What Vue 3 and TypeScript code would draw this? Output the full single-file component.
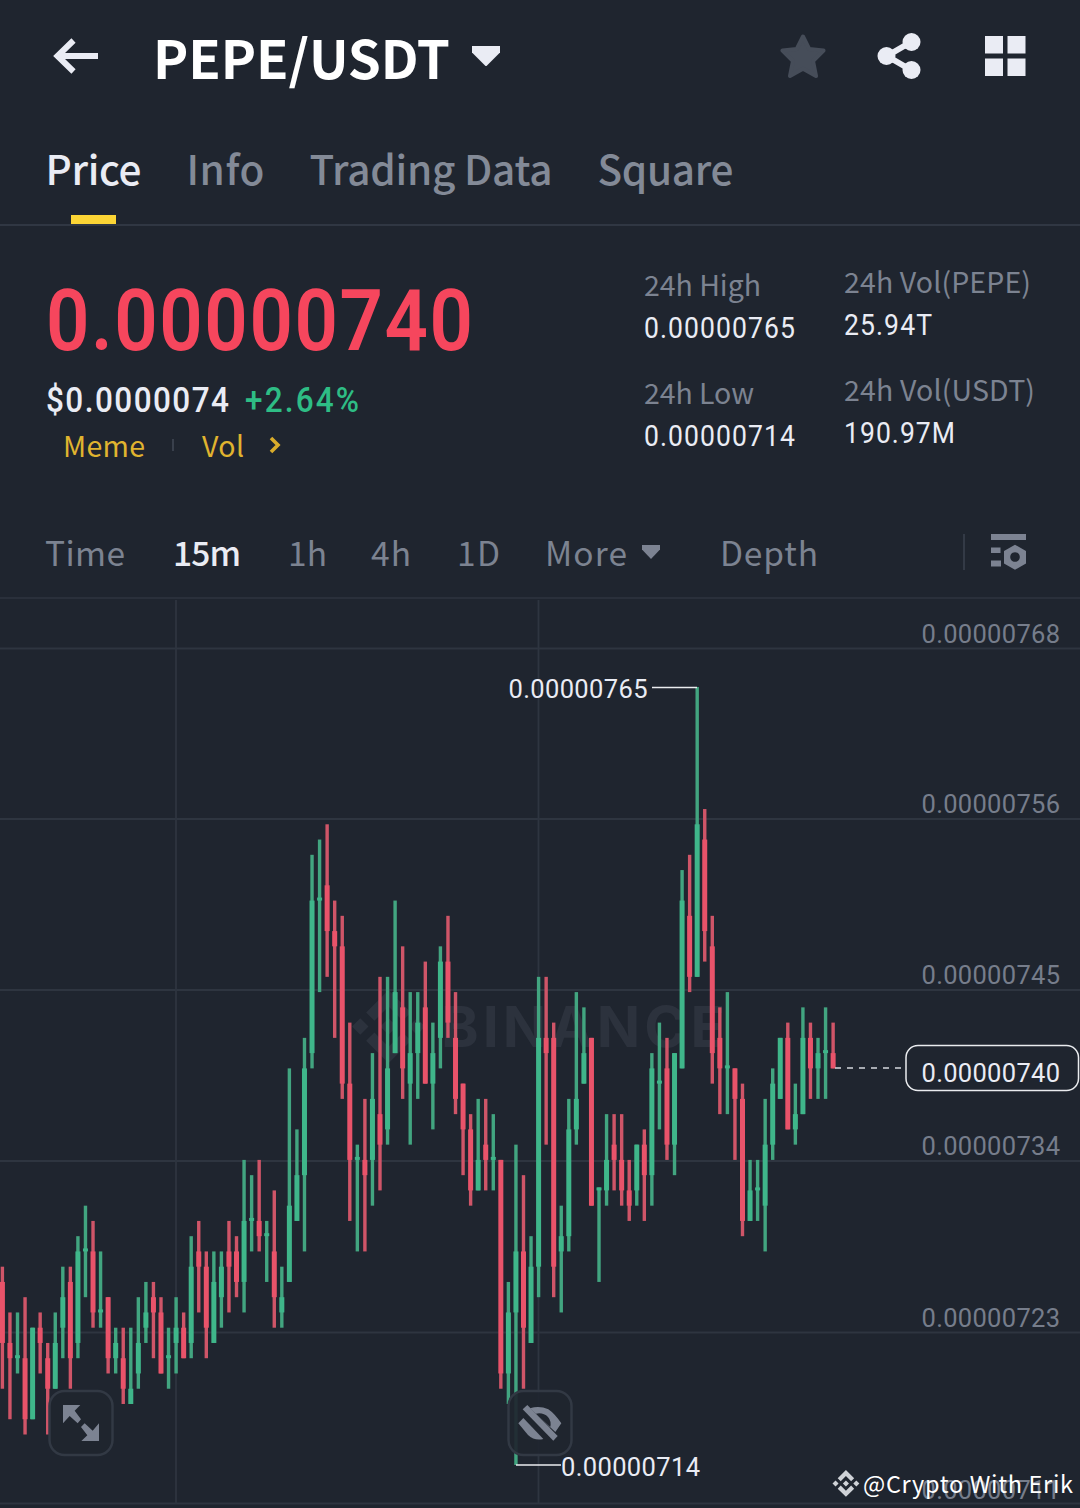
<script setup lang="ts">
interface Tab { label: string; width: number; active?: boolean }
interface Stat { label: string; labelWidth: number; value: string; valueWidth: number }
interface Candle { x: number; up: boolean; high: number; top: number; bottom: number; low: number }

// Spreads the letters of a label so that its glyphs span the given width.
const vFit = {
  mounted(el: HTMLElement, binding: { value: number }) {
    const count = (el.textContent ?? '').length
    const scale = el.classList.contains('digits') ? 0.9 : 1
    const spacing = (binding.value / scale - el.getBoundingClientRect().width / scale) / Math.max(count - 1, 1)
    el.style.letterSpacing = `${spacing}px`
    el.style.marginRight = `${-spacing - (1 - scale) * (binding.value / scale)}px`
  },
}

const tabs: Tab[] = [
  { label: 'Price', width: 96, active: true },
  { label: 'Info', width: 78 },
  { label: 'Trading Data', width: 243 },
  { label: 'Square', width: 136 },
]

const statColumns: Stat[][] = [
  [
    { label: '24h High', labelWidth: 117, value: '0.00000765', valueWidth: 151 },
    { label: '24h Low', labelWidth: 110, value: '0.00000714', valueWidth: 151 },
  ],
  [
    { label: '24h Vol(PEPE)', labelWidth: 187, value: '25.94T', valueWidth: 88 },
    { label: '24h Vol(USDT)', labelWidth: 191, value: '190.97M', valueWidth: 111 },
  ],
]

const HIGH = 765
const TOP_Y = 687
const STEP = 15.255
const yOf = (ticks: number): number => TOP_Y + ticks * STEP

// Direction, then high, body top, body bottom and low, in ticks below the 24h high.
const series = `
R38,39,43,46 R41,43,44,48 G41,44,44,45 R40,44,48,49 G42,42,48,48 R41,42,43,45 R43,44,46,49 G41,43,46,46
G38,40,42,44 R38,39,44,46 G36,37,43,44 G34,37,37,40 R35,37,41,42 G37,41,41,42 R40,40,44,45 G42,43,44,45
R42,44,46,47 G42,46,47,47 G40,43,45,46 G39,41,42,43 R39,40,41,44 R40,41,45,45 G42,44,44,46 G40,42,43,45
R41,42,44,44 G36,38,43,44 R35,37,38,41 R37,38,42,44 G37,39,43,43 G37,38,40,42 R35,37,38,41 R36,37,39,40
G31,35,39,41 G32,35,35,37 R31,35,36,37 G35,36,36,39 R33,37,40,42 G38,40,41,42 G25,34,39,39 G29,32,35,35
G23,25,32,37 G11,14,24,25 G10,14,14,20 R9,13,16,19 R14,16,17,23 R15,17,26,27 R22,26,31,35 G30,31,31,37
R27,31,32,37 G24,27,31,34 R19,28,30,33 G19,25,29,30 G14,20,24,24 R17,21,25,27 G20,24,26,30 G20,22,24,27
R18,21,26,26 G22,24,26,29 G17,18,23,25 R15,18,22,23 R20,23,27,28 R26,26,29,32 R28,29,33,34 G27,31,33,33
R27,30,31,33 G28,31,31,33 R31,31,45,46 G39,41,45,47 G30,37,41,51 R32,37,42,46 G36,38,43,43 G19,23,38,40
R19,23,24,30 R22,23,38,40 G34,36,37,41 G27,29,36,37 G20,27,29,30 G21,24,26,26 R23,23,34,34 G33,33,33,39
G28,31,33,34 R28,30,31,33 R28,31,33,34 R31,33,34,35 G30,30,33,34 R29,30,32,35 G24,25,32,34 G22,26,26,29
R23,25,30,31 G24,24,30,32 G12,14,25,25 R11,15,19,20 G0,9,19,19 R8,10,16,18 R15,17,24,26 R21,23,25,28
G20,25,25,28 R25,25,27,31 R26,27,35,36 G31,33,35,35 G31,33,33,35 G27,30,34,37 G25,26,30,31 G23,23,27,27
R22,23,29,29 G26,28,29,30 G21,23,28,28 R22,23,25,27 G23,24,25,27 G21,24,24,27 R22,24,25,25`

const candles: Candle[] = series.trim().split(/\s+/).map((entry, i) => {
  const [high, top, bottom, low] = entry.slice(1).split(',').map(Number)
  const bottomY = yOf(bottom)
  return {
    x: 2.4 + i * 7.552,
    up: entry[0] === 'G',
    high: top === high ? Math.min(yOf(high), bottomY - 3) : yOf(high),
    top: Math.min(yOf(top), bottomY - 3),
    bottom: bottomY,
    low: yOf(low),
  }
})

const axis = [
  { price: 768, line: 648.5, center: 634 },
  { price: 756, line: 819, center: 804 },
  { price: 745, line: 990, center: 975 },
  { price: 734, line: 1161, center: 1146 },
  { price: 723, line: 1332.5, center: 1318 },
  { price: 711, line: 1503.5, center: 1489.5 },
]
const format = (ticks: number): string => `0.00000${ticks}`

const logo =
  'M16.624 13.92l2.7175 2.7154-7.353 7.353-7.353-7.352 2.7175-2.7164 4.6355 4.6595zM21.26 9.2836L24 12l-2.7154 2.7164L18.5682 12zM11.9885 9.2846l2.7163 2.6914-2.7164 2.7174L9.2721 12zM2.7163 9.2836L5.4088 12l-2.6914 2.6924L0 12zM11.9885.0115l7.353 7.329-2.7174 2.7154-4.6356-4.6356-4.6355 4.6595-2.7174-2.7154z'
</script>

<template>
  <main class="screen">
    <header class="header">
      <svg class="back" width="48" height="40" viewBox="0 0 48 40">
        <path d="M46 20H5M21.500 4.500L5.500 20l16 15.500" fill="none" stroke="#eaecf4" stroke-width="6" />
      </svg>
      <h1 class="title"><span v-fit="297" class="fit">PEPE/USDT</span></h1>
      <svg width="28" height="20" viewBox="0 0 28 20"><path d="M0 0h28v6.500L14 20.500 0 6.500z" fill="#eaecf4" /></svg>
      <div class="actions">
        <svg width="46" height="48" viewBox="0 0 46 48">
          <path d="M23 4.500l6.200 12.500L43.500 18.500 33 29 36 44l-13-7.200L10 44l3-15L2.500 18.500l14.300-1.500z" fill="#464d59" stroke="#464d59" stroke-width="4" stroke-linejoin="round" />
        </svg>
        <svg width="44" height="48" viewBox="0 0 44 48">
          <path d="M34 10L10 24l24 14" fill="none" stroke="#eaecf4" stroke-width="6" />
          <circle cx="9.500" cy="24" r="9" fill="#eaecf4" />
          <circle cx="34.500" cy="10" r="9" fill="#eaecf4" />
          <circle cx="34.500" cy="38" r="9" fill="#eaecf4" />
        </svg>
        <svg width="41" height="40" viewBox="0 0 41 40">
          <path d="M0 0h18v17.500H0zM22.500 0h18v17.500h-18zM0 22.500h18V40H0zM22.500 22.500h18V40h-18z" fill="#eaecf4" />
        </svg>
      </div>
    </header>

    <nav class="tabs">
      <div v-for="tab in tabs" :key="tab.label" class="tab" :class="{ active: tab.active }">
        <span v-fit="tab.width" class="fit">{{ tab.label }}</span>
      </div>
    </nav>

    <section class="summary">
      <div class="quote">
        <div class="price"><span v-fit="427" class="fit digits">0.00000740</span></div>
        <div class="fiat">
          <span v-fit="183" class="fit digits">$0.0000074</span>
          <span v-fit="114" class="fit digits change">+2.64%</span>
        </div>
        <div class="tags">
          <span v-fit="82" class="fit">Meme</span>
          <i class="tag-rule"></i>
          <span v-fit="42" class="fit">Vol</span>
          <svg width="12" height="18" viewBox="0 0 12 18"><path d="M2 2l7 7-7 7" fill="none" stroke="#d9ac2b" stroke-width="3.600" /></svg>
        </div>
      </div>
      <div v-for="(column, c) in statColumns" :key="c" class="stats" :class="{ volume: c === 1 }">
        <div v-for="stat in column" :key="stat.label" class="stat">
          <div class="stat-label"><span v-fit="stat.labelWidth" class="fit">{{ stat.label }}</span></div>
          <div class="stat-value"><span v-fit="stat.valueWidth" class="fit digits">{{ stat.value }}</span></div>
        </div>
      </div>
    </section>

    <nav class="periods">
      <div class="period time"><span v-fit="80" class="fit">Time</span></div>
      <div class="period m15"><span v-fit="68" class="fit">15m</span></div>
      <div class="period h1"><span v-fit="39" class="fit">1h</span></div>
      <div class="period h4"><span v-fit="40" class="fit">4h</span></div>
      <div class="period d1"><span v-fit="43" class="fit">1D</span></div>
      <div class="period more">
        <span v-fit="82" class="fit">More</span>
        <svg class="caret" width="18" height="14" viewBox="0 0 18 14"><path d="M0 0h18v4.500L9 14 0 4.500z" fill="#7c8392" /></svg>
      </div>
      <div class="period depth"><span v-fit="98" class="fit">Depth</span></div>
      <i class="period-rule"></i>
      <svg class="settings" width="36" height="38" viewBox="0 0 36 38">
        <path d="M0 2h35v6H0zM0 15.500h9.500v5.500H0zM0 28.500h10v6H0z" fill="#7c8392" />
        <path fill-rule="evenodd" d="M24 13.500l11 6.200v12.600l-11 6.200-11-6.200V19.700zM24 21a4.800 4.800 0 1 0 .01 0z" transform="translate(0 -.8)" fill="#7c8392" />
      </svg>
    </nav>

    <svg class="chart" width="1080" height="911" viewBox="0 597 1080 911">
      <rect y="597" width="1080" height="2" fill="#2a303b" />
      <g stroke="#2e3540" stroke-width="1.800">
        <line v-for="row in axis" :key="row.price" x1="0" x2="1080" :y1="row.line" :y2="row.line" />
        <line x1="176" x2="176" y1="600" y2="1504" />
        <line x1="538.500" x2="538.500" y1="600" y2="1504" />
      </g>

      <g fill="#2c323d">
        <path :d="logo" transform="translate(352 990) scale(3.050)" />
        <text class="brand" x="441" y="1047" textLength="284">BINANCE</text>
      </g>

      <g class="axis">
        <text v-for="row in axis" :key="row.price" x="921.500" :y="row.center + 9.300" textLength="138.500">{{ format(row.price) }}</text>
      </g>

      <g v-for="(candle, i) in candles" :key="i" :class="candle.up ? 'up' : 'down'">
        <rect class="wick" :x="candle.x - 1.700" :y="candle.high" width="3.400" :height="candle.low - candle.high" />
        <rect :x="candle.x - 2.500" :y="candle.top" width="5" :height="candle.bottom - candle.top" />
      </g>

      <g class="marks">
        <path d="M652 687.500h45M516 1465h45" stroke="#eaecef" stroke-width="1.600" />
        <text x="508.500" y="698" textLength="139">{{ format(HIGH) }}</text>
        <text x="561" y="1476" textLength="139">0.00000714</text>
        <path d="M835 1068h67" stroke="#d5d8de" stroke-width="1.600" stroke-dasharray="6 6" />
        <rect x="906" y="1045.500" width="172.500" height="45" rx="12" fill="#1f252f" stroke="#eaecef" stroke-width="1.500" />
        <text x="921.500" y="1082" textLength="138.500">0.00000740</text>
      </g>

      <g fill="#1f252f" fill-opacity=".92" stroke="#323944" stroke-width="2.500">
        <rect x="49.500" y="1391" width="63" height="64" rx="15" />
        <rect x="508.500" y="1391" width="63" height="64" rx="15" />
      </g>
      <g transform="translate(0 1180) scale(.33333)" fill="#7c8392">
        <path d="M189 675h52l-17 17 19 26-10 12-24-22-20 22zM297 783h-53l18-17-19-25 11-11 24 22 19-22z" />
      </g>
      <g transform="translate(480 1120) scale(.33333)" fill="#7c8392">
        <path d="M128 868l14-13 91 93-13 14z" />
        <path fill-rule="evenodd" d="M150 865q28-10 55 3 18 12 39 42l-18 26zM168 881l42 42q6-18-6-32-14-14-36-10z" />
        <path d="M115 910l15-16 60 63q-27 6-46-12z" />
      </g>

      <g>
        <path :d="logo" fill="#cfd2d7" transform="translate(832.500 1470) scale(1.120)" />
        <text class="author" x="863" y="1493" textLength="210">@Crypto With Erik</text>
      </g>
    </svg>
  </main>
</template>

<style>
body { background: #1f252f; }
</style>

<style scoped>
.screen {
  width: 1080px;
  height: 1508px;
  overflow: hidden;
  background: #1f252f;
  color: #eaecf4;
  font-family: "Noto Sans CJK SC", "Noto Sans", sans-serif;
}
svg { display: block; flex: none; }
.fit { display: inline-block; white-space: nowrap; }
.digits { font-family: Roboto, sans-serif; transform: scaleX(.9); transform-origin: left; }

.header { display: flex; align-items: center; height: 112px; padding: 0 54px 0 52px; }
.title {
  margin: 0 22px 0 53px;
  color: #fff;
  font-size: 53px;
  font-weight: 700;
  line-height: 102px;
}
.actions { display: flex; align-items: center; margin-left: auto; }
.actions svg + svg { margin-left: 51px; }
.actions svg:last-child { margin-left: 64px; }

.tabs {
  display: flex;
  gap: 45px;
  box-sizing: border-box;
  height: 114px;
  padding: 0 45.500px;
  border-bottom: 2px solid #303743;
}
.tab {
  display: flex;
  flex-direction: column;
  align-items: center;
  justify-content: space-between;
  color: #838a97;
  font-size: 40.500px;
  font-weight: 500;
  line-height: 112px;
}
.tab.active { color: #eaecf4; }
.tab.active::after { content: ""; flex: none; width: 45px; height: 9px; margin-top: -9px; background: #fcd535; }

.summary { display: flex; height: 282px; }
.quote { width: 598px; padding: 41px 0 0 46px; }
.price { height: 93px; color: #f6465d; font-size: 84.500px; font-weight: 600; line-height: 93px; }
.fiat { display: flex; gap: 16px; height: 50px; margin-top: 15px; font-size: 35px; font-weight: 500; line-height: 51px; }
.change { color: #2ebd85; }
.tags { display: flex; align-items: center; height: 40px; margin-left: 17px; color: #e0b42f; font-size: 28.500px; line-height: 40px; }
.tag-rule { width: 2px; height: 12px; margin: 0 28px 0 27px; background: #39404c; }
.tags svg { margin-left: 25px; }
.stats { width: 200px; padding-top: 39px; }
.stats.volume { padding-top: 36px; }
.stat { height: 108px; }
.stat-label { height: 40px; color: #7c8391; font-size: 28.500px; line-height: 37px; }
.stat-value { font-size: 29.500px; line-height: 40px; }

.periods { display: flex; align-items: center; box-sizing: border-box; height: 89px; padding: 0 0 2px 45px; }
.period { color: #7c8391; font-size: 33.500px; line-height: 80px; }
.time { width: 128px; }
.m15 { width: 115px; color: #eaecf4; font-weight: 500; }
.h1 { width: 83px; }
.h4 { width: 86px; }
.d1 { width: 88px; }
.more { display: flex; align-items: center; gap: 15px; width: 175px; }
.depth { width: 243px; }
.period-rule { width: 2px; height: 36px; margin-right: 26px; background: #333a46; }
.settings { margin-top: -1px; }

.chart { font-family: Roboto, sans-serif; }
.axis, .marks { font-size: 25.500px; }
.axis { fill: #767d8b; }
.marks { fill: #eaecf4; }
.brand { font: 700 57px Inter, sans-serif; }
.author { fill: #fff; font: 400 23.500px "Noto Sans CJK SC", sans-serif; }
.up { fill: #3fb68a; }
.down { fill: #e9536a; }
.up .wick { fill: #42a580; }
.down .wick { fill: #cf5568; }
</style>
